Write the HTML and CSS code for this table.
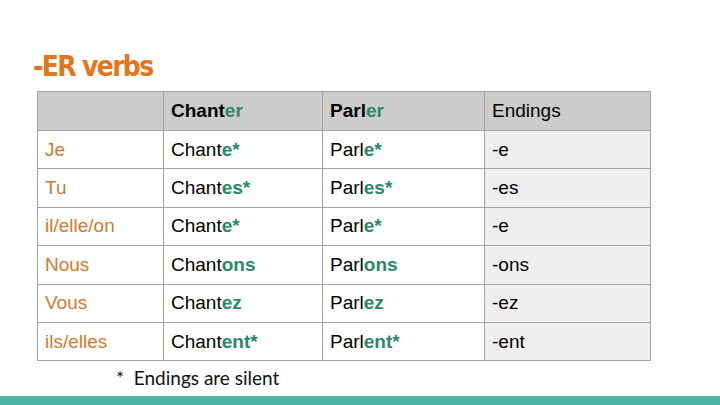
FILE: index.html
```html
<!DOCTYPE html>
<html>
<head>
<meta charset="utf-8">
<link rel="stylesheet" href="styles.css">
</head>
<body>
<div class="slide">
  <h1 class="title">-ER verbs</h1>
  <table class="verbs">
    <colgroup>
      <col class="c1"><col class="c2"><col class="c3"><col class="c4">
    </colgroup>
    <thead>
      <tr>
        <th></th>
        <th class="hd">Chant<span class="end">er</span></th>
        <th class="hd">Parl<span class="end">er</span></th>
        <th class="endings plain">Endings</th>
      </tr>
    </thead>
    <tbody>
      <tr><td class="pro">Je</td><td>Chant<b class="end">e*</b></td><td>Parl<b class="end">e*</b></td><td class="endings">-e</td></tr>
      <tr><td class="pro">Tu</td><td>Chant<b class="end">es*</b></td><td>Parl<b class="end">es*</b></td><td class="endings">-es</td></tr>
      <tr><td class="pro">il/elle/on</td><td>Chant<b class="end">e*</b></td><td>Parl<b class="end">e*</b></td><td class="endings">-e</td></tr>
      <tr><td class="pro">Nous</td><td>Chant<b class="end">ons</b></td><td>Parl<b class="end">ons</b></td><td class="endings">-ons</td></tr>
      <tr><td class="pro">Vous</td><td>Chant<b class="end">ez</b></td><td>Parl<b class="end">ez</b></td><td class="endings">-ez</td></tr>
      <tr><td class="pro">ils/elles</td><td>Chant<b class="end">ent*</b></td><td>Parl<b class="end">ent*</b></td><td class="endings">-ent</td></tr>
    </tbody>
  </table>
  <p class="note">*  Endings are silent</p>
  <div class="bar"></div>
</div>
</body>
</html>
```

FILE: styles.css
```css
html, body {
  margin: 0;
  padding: 0;
  background: #ffffff;
}
.slide {
  width: 720px;
  height: 405px;
  display: flex;
  flex-direction: column;
  overflow: hidden;
}
.title {
  margin: 0;
  padding: 47px 0 0 33px;
  height: 44px;
  font-family: "DejaVu Sans Condensed", "DejaVu Sans", sans-serif;
  font-weight: bold;
  font-size: 28px;
  line-height: 40px;
  color: #e3761c;
  letter-spacing: -1.7px;
}
.verbs {
  margin-left: 37px;
  width: 614px;
  border-collapse: collapse;
  table-layout: fixed;
  font-family: "Liberation Sans", Arial, sans-serif;
  font-size: 19px;
  color: #000;
}
.c1 { width: 126px; }
.c2 { width: 159px; }
.c3 { width: 162px; }
.c4 { width: 166px; }
.verbs th, .verbs td {
  border: 1px solid #a3a3a3;
  padding: 0 0 0 7px;
  text-align: left;
  vertical-align: middle;
}
.verbs thead tr { height: 39px; }
.verbs tbody tr { height: 38.4px; }
.verbs th {
  background: #cccccc;
  font-weight: bold;
}
.verbs th.plain { font-weight: normal; }
.verbs td.endings { background: #efefef; }
.verbs td.pro { color: #d27a2c; }
.end { color: #2a8a68; font-weight: bold; }
.note {
  margin: 4px 0 0 116px;
  font-family: Lato, "Open Sans", sans-serif;
  font-size: 19px;
  line-height: 26px;
  white-space: pre;
  color: #111;
}
.bar {
  margin-top: auto;
  height: 9px;
  background: #4db3a5;
}
```
